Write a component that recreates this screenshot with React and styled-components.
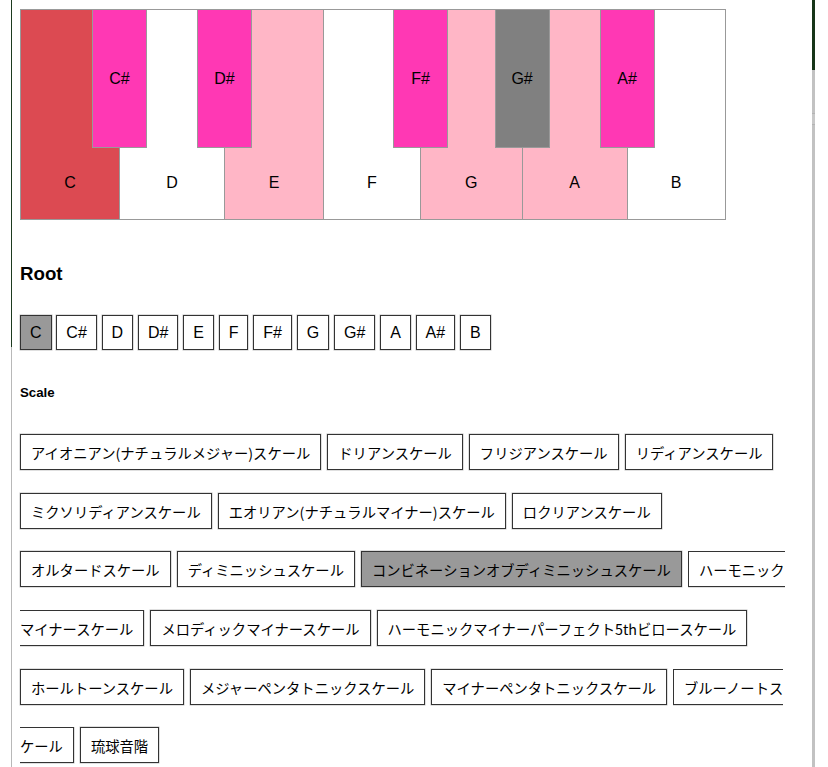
import styled, { createGlobalStyle } from 'styled-components';

const GlobalStyle = createGlobalStyle`
  html, body {
    margin: 0;
    padding: 0;
    background: #fff;
    overflow: hidden;
  }
  * {
    box-sizing: border-box;
  }
`;

const TONES = {
  root: '#dc4a52',
  scaleWhite: '#ffb6c6',
  scaleBlack: '#ff38b4',
  off: '#fff',
  cursor: '#808080',
};

// white keys with the black key that sits on their right edge
const KEYS = [
  { name: 'C', width: 99, tone: 'root', sharp: { name: 'C#', tone: 'scaleBlack' } },
  { name: 'D', width: 105, tone: 'off', sharp: { name: 'D#', tone: 'scaleBlack' } },
  { name: 'E', width: 99, tone: 'scaleWhite' },
  { name: 'F', width: 97, tone: 'off', sharp: { name: 'F#', tone: 'scaleBlack' } },
  { name: 'G', width: 101.6, tone: 'scaleWhite', sharp: { name: 'G#', tone: 'cursor' } },
  { name: 'A', width: 105, tone: 'scaleWhite', sharp: { name: 'A#', tone: 'scaleBlack' } },
  { name: 'B', width: 97.1, tone: 'off' },
];

const ROOTS = ['C', 'C#', 'D', 'D#', 'E', 'F', 'F#', 'G', 'G#', 'A', 'A#', 'B'];

const SCALE_GROUPS = [
  [
    'アイオニアン(ナチュラルメジャー)スケール',
    'ドリアンスケール',
    'フリジアンスケール',
    'リディアンスケール',
    'ミクソリディアンスケール',
    'エオリアン(ナチュラルマイナー)スケール',
    'ロクリアンスケール',
  ],
  [
    'オルタードスケール',
    'ディミニッシュスケール',
    'コンビネーションオブディミニッシュスケール',
    'ハーモニックマイナースケール',
    'メロディックマイナースケール',
    'ハーモニックマイナーパーフェクト5thビロースケール',
    'ホールトーンスケール',
    'メジャーペンタトニックスケール',
    'マイナーペンタトニックスケール',
    'ブルーノートスケール',
    '琉球音階',
  ],
];

const App = () => {
  const root = 'C';
  const scale = 'コンビネーションオブディミニッシュスケール';

  return (
    <>
      <GlobalStyle />
      <Page>
        <LeftRule />
        <Main>
          <Piano>
            {KEYS.map((key) => (
              <WhiteKey key={key.name} $tone={key.tone} style={{ width: key.width }}>
                <WhiteLabel>{key.name}</WhiteLabel>
                {key.sharp && (
                  <BlackKey $tone={key.sharp.tone}>{key.sharp.name}</BlackKey>
                )}
              </WhiteKey>
            ))}
          </Piano>

          <Heading>Root</Heading>
          <RootRow>
            {ROOTS.map((note) => (
              <RootButton key={note} $active={note === root}>
                {note}
              </RootButton>
            ))}
          </RootRow>

          <SubHeading>Scale</SubHeading>
          {SCALE_GROUPS.map((group, index) => (
            <ScaleGroup key={index} lang="ja">
              {group.map((name) => (
                <ScaleButton key={name} $active={name === scale}>
                  {name}
                </ScaleButton>
              ))}
            </ScaleGroup>
          ))}
        </Main>
        <RightRule />
      </Page>
    </>
  );
};

export default App;

const Page = styled.div`
  display: flex;
  min-height: 100vh;
  padding-left: 11px;
  font-family: 'Liberation Sans', Arial, sans-serif;
  color: #000;
`;

const LeftRule = styled.div`
  flex: 0 0 1px;
  background: linear-gradient(#1d3a1f 0 347px, #b8b8b8 347px);
`;

const RightRule = styled.div`
  flex: 0 0 3px;
  margin-left: 26px;
  background: linear-gradient(
    #173518 0 70px,
    #c2c2c2 70px 113px,
    #b3b3b3 113px 114px,
    #c8c8c8 114px 124px,
    #b3b3b3 124px 125px,
    #c2c2c2 125px
  );
`;

const Main = styled.main`
  flex: 0 0 774px;
  padding-left: 8px;
`;

const Piano = styled.div`
  display: flex;
  width: 706px;
  height: 211px;
  margin-top: 9px;
  border: 1px solid #999;
`;

const WhiteKey = styled.div`
  position: relative;
  display: flex;
  flex-direction: column;
  justify-content: flex-end;
  flex: 0 0 auto;
  height: 100%;
  border-right: 1px solid #999;
  background: ${({ $tone }) => TONES[$tone]};
  &:last-child {
    border-right: none;
  }
`;

const WhiteLabel = styled.div`
  display: flex;
  align-items: center;
  justify-content: center;
  height: 73px;
  font-size: 16px;
`;

const BlackKey = styled.div`
  position: absolute;
  top: 0;
  right: -28px;
  z-index: 1;
  display: flex;
  align-items: center;
  justify-content: center;
  width: 55px;
  height: 138px;
  border: 1px solid #999;
  border-top: none;
  font-size: 16px;
  background: ${({ $tone }) => TONES[$tone]};
`;

const Heading = styled.h3`
  margin: 43px 0 19px;
  font-size: 18.72px;
  font-weight: bold;
`;

const RootRow = styled.div`
  font-size: 16px;
  line-height: 58.66px;
`;

const RootButton = styled.span`
  padding: 8px 9px;
  margin-right: 4.8px;
  border: 1px solid #333;
  box-shadow: 0 0 0 0.5px rgba(0, 0, 0, 0.25);
  background: ${({ $active }) => ($active ? '#999' : '#fff')};
  cursor: pointer;
`;

const SubHeading = styled.h5`
  margin: 22.18px 0 23.8px;
  font-size: 13.28px;
  font-weight: bold;
`;

const ScaleGroup = styled.div`
  font-family: 'Noto Sans CJK JP', 'Liberation Sans', sans-serif;
  font-size: 14.3px;
  line-height: 58.66px;
  line-break: strict;
`;

const ScaleButton = styled.span`
  padding: 6.5px 10px;
  margin-right: 6px;
  border: 1px solid #333;
  box-shadow: 0 0 0 0.5px rgba(0, 0, 0, 0.25);
  background: ${({ $active }) => ($active ? '#999' : '#fff')};
  cursor: pointer;
`;
